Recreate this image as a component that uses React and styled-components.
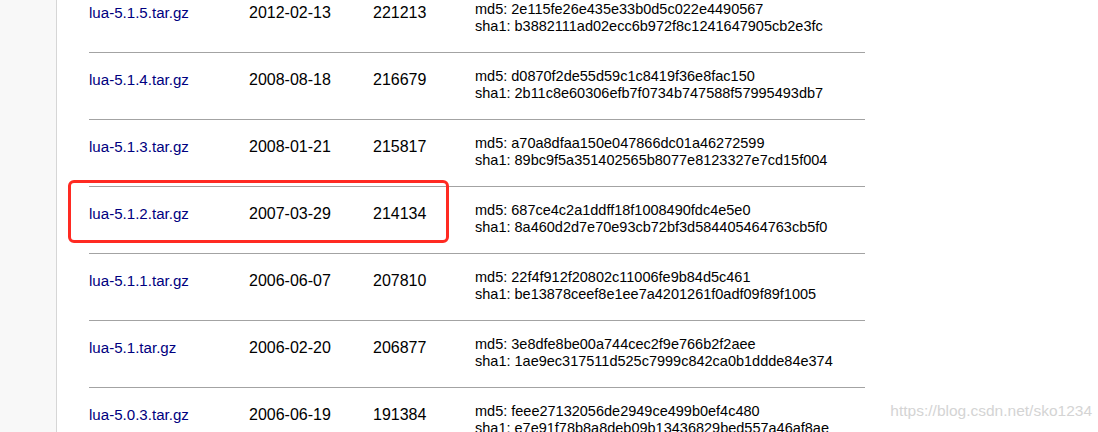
import React from "react";
import styled, { createGlobalStyle } from "styled-components";

const releases = [
  {
    file: "lua-5.1.5.tar.gz",
    date: "2012-02-13",
    size: "221213",
    md5: "2e115fe26e435e33b0d5c022e4490567",
    sha1: "b3882111ad02ecc6b972f8c1241647905cb2e3fc"
  },
  {
    file: "lua-5.1.4.tar.gz",
    date: "2008-08-18",
    size: "216679",
    md5: "d0870f2de55d59c1c8419f36e8fac150",
    sha1: "2b11c8e60306efb7f0734b747588f57995493db7"
  },
  {
    file: "lua-5.1.3.tar.gz",
    date: "2008-01-21",
    size: "215817",
    md5: "a70a8dfaa150e047866dc01a46272599",
    sha1: "89bc9f5a351402565b8077e8123327e7cd15f004"
  },
  {
    file: "lua-5.1.2.tar.gz",
    date: "2007-03-29",
    size: "214134",
    md5: "687ce4c2a1ddff18f1008490fdc4e5e0",
    sha1: "8a460d2d7e70e93cb72bf3d584405464763cb5f0",
    marked: true
  },
  {
    file: "lua-5.1.1.tar.gz",
    date: "2006-06-07",
    size: "207810",
    md5: "22f4f912f20802c11006fe9b84d5c461",
    sha1: "be13878ceef8e1ee7a4201261f0adf09f89f1005"
  },
  {
    file: "lua-5.1.tar.gz",
    date: "2006-02-20",
    size: "206877",
    md5: "3e8dfe8be00a744cec2f9e766b2f2aee",
    sha1: "1ae9ec317511d525c7999c842ca0b1ddde84e374"
  },
  {
    file: "lua-5.0.3.tar.gz",
    date: "2006-06-19",
    size: "191384",
    md5: "feee27132056de2949ce499b0ef4c480",
    sha1: "e7e91f78b8a8deb09b13436829bed557a46af8ae"
  }
];

const GlobalStyle = createGlobalStyle`
  body {
    margin: 0;
    overflow: hidden;
    background: #fff;
    font-family: "Liberation Sans", Arial, sans-serif;
    color: #000;
  }
`;

const App = () => (
  <Page>
    <GlobalStyle />
    <Sidebar />
    <Main>
      <Table>
        {releases.map(r => (
          <Row key={r.file}>
            {r.marked && <Highlight />}
            <Cell>
              <FileLink href="#">{r.file}</FileLink>
            </Cell>
            <Cell>{r.date}</Cell>
            <Cell>{r.size}</Cell>
            <Hashes>
              <div>md5: {r.md5}</div>
              <div>sha1: {r.sha1}</div>
            </Hashes>
          </Row>
        ))}
      </Table>
      <Watermark>https://blog.csdn.net/sko1234</Watermark>
    </Main>
  </Page>
);

export default App;

const Page = styled.div`
  display: flex;
  height: 432px;
  overflow: hidden;
`;

const Sidebar = styled.div`
  width: 56px;
  flex-shrink: 0;
  background: #f8f8f8;
  border-right: 1px solid #d6d6d6;
`;

const Main = styled.div`
  position: relative;
  flex: 1;
  padding-left: 32px;
`;

const Table = styled.div`
  width: 776px;
  margin-top: -15px;
`;

const Row = styled.div`
  position: relative;
  display: grid;
  grid-template-columns: 160px 124px 102px 1fr;
  height: 66px;
  border-top: 1px solid #a3a3a3;
`;

const Cell = styled.div`
  padding-top: 18px;
  font-size: 16px;
  line-height: 18px;
  white-space: nowrap;
`;

const FileLink = styled.a`
  color: #000080;
  font-size: 15.1px;
  text-decoration: none;
`;

const Hashes = styled.div`
  padding-top: 15px;
  font-size: 14.5px;
  line-height: 17px;
  white-space: nowrap;
`;

const Highlight = styled.div`
  position: absolute;
  left: -21px;
  top: -7px;
  width: 381px;
  height: 63px;
  box-sizing: border-box;
  border: 3px solid #ff2a22;
  border-radius: 6px;
  pointer-events: none;
`;

const Watermark = styled.div`
  position: absolute;
  right: 6px;
  top: 402px;
  font-size: 15.5px;
  color: #d4d4d4;
  white-space: nowrap;
`;
